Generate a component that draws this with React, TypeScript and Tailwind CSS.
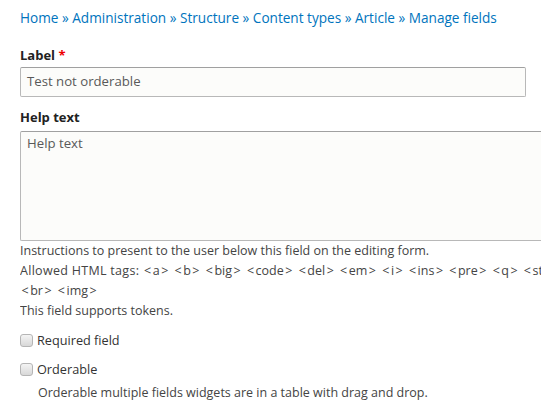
import React from "react";

const font = { fontFamily: '"Open Sans", "DejaVu Sans", sans-serif' };

function Checkbox() {
  return (
    <span className="inline-block w-[13px] h-[13px] rounded-[3px] border border-[#b5b5b5] bg-gradient-to-b from-[#f4f4f4] to-[#d8d8d8] shrink-0" />
  );
}

function Tag({ name }: { name: string }) {
  return (
    <span>
      <span className="px-[1.5px]">&lt;</span>
      {name}
      <span className="px-[1.5px]">&gt;</span>
    </span>
  );
}

const tags = ["a", "b", "big", "code", "del", "em", "i", "ins", "pre", "q", "strong"];

export default function App() {
  return (
    <div className="w-[541px] h-[407px] overflow-hidden bg-white pl-[20px] text-[#333]" style={font}>
      <div className="pt-[9px] text-[13.6px] leading-[18px] text-[#0074bd] whitespace-nowrap">
        Home » Administration » Structure » Content types » Article » Manage fields
      </div>
      <div className="mt-[19px] text-[13px] leading-[18px] font-bold text-[#222]">
        Label <span className="text-[#e00] font-bold">*</span>
      </div>
      <div className="mt-[3px] w-[506px] h-[30px] border border-[#b8b8b8] border-t-[#a0a0a0] rounded-[2px] bg-[#fcfcfa] px-[6px] flex items-center text-[13.2px] text-[#595959]">
        Test not orderable
      </div>
      <div className="mt-[11px] text-[13px] leading-[18px] font-bold text-[#222]">Help text</div>
      <div className="mt-[5px] w-[540px] h-[110px] border border-[#b8b8b8] border-t-[#a0a0a0] border-r-0 rounded-l-[2px] bg-[#fcfcfa] px-[6px] pt-[2px] text-[13.2px] text-[#595959]">
        Help text
      </div>
      <div className="mt-0 text-[12.5px] leading-[20px] text-[#444] whitespace-nowrap overflow-hidden">
        <div>Instructions to present to the user below this field on the editing form.</div>
        <div>
          <span className="tracking-[0.3px]">Allowed HTML tags:</span>
          {tags.map((t) => (
            <React.Fragment key={t}>
              {" "}
              <Tag name={t} />
            </React.Fragment>
          ))}
        </div>
        <div>
          <Tag name="br" /> <Tag name="img" />
        </div>
        <div>This field supports tokens.</div>
      </div>
      <div className="mt-[10px] flex items-center gap-[4px] text-[12.7px] leading-[18px] text-[#333]">
        <Checkbox />
        <span>Required field</span>
      </div>
      <div className="mt-[11px] flex items-center gap-[4px] text-[12.7px] leading-[18px] text-[#333]">
        <Checkbox />
        <span>Orderable</span>
      </div>
      <div className="mt-[6px] pl-[18px] text-[12.5px] leading-[18px] text-[#444] whitespace-nowrap">
        Orderable multiple fields widgets are in a table with drag and drop.
      </div>
    </div>
  );
}
